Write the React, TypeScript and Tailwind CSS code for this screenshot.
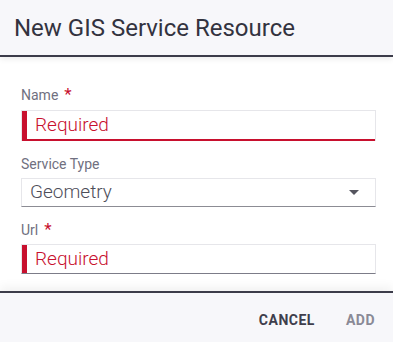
import React from "react";

function RequiredInput() {
  return (
    <div className="flex h-[31px] border border-[#e6e6ea] border-b-0 bg-white">
      <div className="w-[5px] bg-[#c8102e] shrink-0" />
      <div className="flex-1 flex items-center pl-[8px] text-[19px] font-light text-[#c8102e] border-b-2 border-[#c8102e]">
        Required
      </div>
    </div>
  );
}

export default function App() {
  return (
    <div
      className="w-[393px] h-[342px] flex flex-col bg-white overflow-hidden"
      style={{ fontFamily: "Roboto, 'Noto Sans', sans-serif" }}
    >
      <div className="h-[57px] shrink-0 bg-[#f7f7fa] border-b-2 border-[#3c3c4a] flex items-center pl-[14px] shadow-[0_2px_6px_rgba(0,0,0,0.08)] relative z-10">
        <span className="text-[24px] font-normal text-[#33333f] leading-none">New GIS Service Resource</span>
      </div>
      <div className="flex-1 flex flex-col px-[21px] pr-[17px] pt-[31px]">
        <div className="text-[14px] text-[#707080] leading-none flex items-start gap-[6px]">
          <span>Name</span>
          <span className="text-[#c8102e] text-[17px] leading-none -mt-[2px]">*</span>
        </div>
        <div className="mt-[7px]">
          <RequiredInput />
        </div>
        <div className="mt-[16px] text-[14px] text-[#707080] leading-none">Service Type</div>
        <div className="mt-[7px] h-[29px] flex items-center justify-between border border-[#e6e6ea] border-b-[#8c8c94] pl-[8px] pr-[16px] text-[19px] font-light text-[#4e4e5a]">
          <span>Geometry</span>
          <svg width="10" height="5" viewBox="0 0 10 5">
            <path d="M0 0 L10 0 L5 5 Z" fill="#55555f" />
          </svg>
        </div>
        <div className="mt-[16px] text-[14px] text-[#707080] leading-none flex items-start gap-[6px]">
          <span>Url</span>
          <span className="text-[#c8102e] text-[17px] leading-none -mt-[2px]">*</span>
        </div>
        <div className="mt-[6px] flex h-[30px] border border-[#e6e6ea] border-b-[#7c7c88] bg-white">
          <div className="w-[5px] bg-[#c8102e] shrink-0" />
          <div className="flex-1 flex items-center pl-[8px] text-[19px] font-light text-[#c8102e]">Required</div>
        </div>
      </div>
      <div className="h-[51px] shrink-0 bg-[#f7f7fa] border-t-2 border-[#3c3c4a] flex items-center justify-end pt-[5px] pr-[18px] gap-[31px] shadow-[0_-4px_10px_rgba(0,0,0,0.06)]">
        <button className="text-[14px] font-bold tracking-[0.5px] text-[#3e3e4c]">CANCEL</button>
        <button className="text-[14px] font-bold tracking-[0.5px] text-[#8a8a96]">ADD</button>
      </div>
    </div>
  );
}
